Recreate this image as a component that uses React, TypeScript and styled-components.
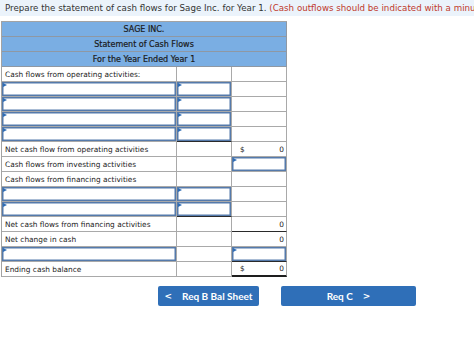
import React from "react";
import styled, { createGlobalStyle } from "styled-components";

type CellKind = "blank" | "label" | "input" | "value";

interface Cell {
  kind: CellKind;
  text?: string;
  dollar?: boolean;
  rule?: "single" | "double";
}

const GlobalStyle = createGlobalStyle`
  body {
    margin: 0;
    background: #ffffff;
    font-family: "DejaVu Sans", Verdana, sans-serif;
  }
`;

const blank: Cell = { kind: "blank" };
const input: Cell = { kind: "input" };
const label = (text: string): Cell => ({ kind: "label", text });

const rows: Cell[][] = [
  [label("Cash flows from operating activities:"), blank, blank],
  [input, input, blank],
  [input, input, blank],
  [input, input, blank],
  [input, { kind: "input", rule: "single" }, blank],
  [label("Net cash flow from operating activities"), blank, { kind: "value", text: "0", dollar: true }],
  [label("Cash flows from investing activities"), blank, input],
  [label("Cash flows from financing activities"), blank, blank],
  [input, input, blank],
  [input, { kind: "input", rule: "single" }, blank],
  [label("Net cash flows from financing activities"), blank, { kind: "value", text: "0", rule: "single" }],
  [label("Net change in cash"), blank, { kind: "value", text: "0" }],
  [input, blank, { kind: "input", rule: "single" }],
  [label("Ending cash balance"), blank, { kind: "value", text: "0", dollar: true, rule: "double" }],
];

const Page = () => {
  return (
    <>
      <GlobalStyle />
      <Instructions>
        Prepare the statement of cash flows for Sage Inc. for Year 1.{" "}
        <Warning>(Cash outflows should be indicated with a minus sign.)</Warning>
      </Instructions>

      <Sheet>
        <Heading>SAGE INC.</Heading>
        <Heading>Statement of Cash Flows</Heading>
        <Heading>For the Year Ended Year 1</Heading>
        {rows.map((row, i) =>
          row.map((cell, j) => (
            <Field key={`${i}-${j}`} $kind={cell.kind} $rule={cell.rule}>
              {cell.kind === "input" && <Marker />}
              {cell.kind === "label" && cell.text}
              {cell.kind === "value" && (
                <>
                  <span>{cell.dollar ? "$" : ""}</span>
                  <span>{cell.text}</span>
                </>
              )}
            </Field>
          ))
        )}
      </Sheet>

      <Nav>
        <NavButton $width={101}>
          <Chevron>&lt;</Chevron> Req B Bal Sheet
        </NavButton>
        <NavButton $width={135}>
          Req C <Chevron>&gt;</Chevron>
        </NavButton>
      </Nav>
    </>
  );
};

export default Page;

const Instructions = styled.div`
  height: 16px;
  line-height: 16px;
  padding-left: 5px;
  background: #ebf3fb;
  font-size: 8.7px;
  color: #333333;
  white-space: nowrap;
  overflow: hidden;
`;

const Warning = styled.span`
  color: #c0392b;
`;

const Sheet = styled.div`
  display: grid;
  grid-template-columns: 175px 55px 55px;
  grid-auto-rows: 15px;
  width: 285px;
  margin: 5px 0 0 1px;
  border-top: 1px solid #a3a3a3;
  border-left: 1px solid #a3a3a3;
  font-size: 7.4px;
  color: #222222;
`;

const Heading = styled.div`
  grid-column: 1 / -1;
  display: flex;
  align-items: center;
  justify-content: center;
  border-right: 1px solid #8f98a3;
  border-bottom: 1px solid #8f98a3;
  background: #7aaee3;
  font-size: 8px;
  color: #1a1a1a;
  -webkit-text-stroke: 0.2px #1a1a1a;
`;

const Field = styled.div<{ $kind: CellKind; $rule?: "single" | "double" }>`
  position: relative;
  display: flex;
  align-items: center;
  justify-content: ${(p) => (p.$kind === "value" ? "space-between" : "flex-start")};
  padding: ${(p) => (p.$kind === "value" ? "0 2px 0 8px" : "0 0 0 3px")};
  background: #ffffff;
  white-space: nowrap;
  overflow: hidden;
  border-right: 1px solid #a9a9a9;
  border-bottom: ${(p) =>
    p.$rule === "double" ? "2px solid #1e1e1e" : p.$rule === "single" ? "1px solid #2a2a2a" : "1px solid #a9a9a9"};
  box-shadow: ${(p) => (p.$kind === "input" ? "inset 0 0 0 1.5px #557aab" : "none")};
`;

const Marker = styled.span`
  position: absolute;
  top: 1px;
  left: 1px;
  width: 0;
  height: 0;
  border-top: 2px solid transparent;
  border-bottom: 2px solid transparent;
  border-left: 4px solid #2f6db5;
`;

const Nav = styled.div`
  display: flex;
  gap: 22px;
  padding: 9px 0 0 158px;
`;

const NavButton = styled.button<{ $width: number }>`
  width: ${(p) => p.$width}px;
  height: 20px;
  display: flex;
  align-items: center;
  justify-content: center;
  gap: 10px;
  border: 0;
  border-radius: 2px;
  background: #2f6fb8;
  color: #ffffff;
  font-family: Lato, "Liberation Sans", sans-serif;
  font-size: 10px;
  font-weight: bold;
  cursor: pointer;
`;

const Chevron = styled.span`
  font-family: "DejaVu Sans", sans-serif;
  font-size: 9px;
  font-weight: bold;
`;
